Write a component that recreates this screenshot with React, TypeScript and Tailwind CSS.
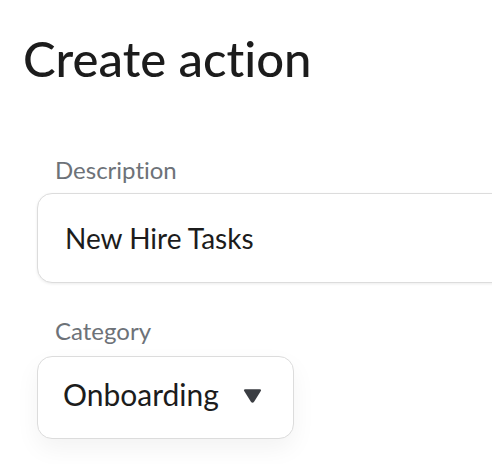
import React from "react"

function Field({ label, children }: { label: string; children: React.ReactNode }) {
  return (
    <div className="flex flex-col">
      <label className="pl-[18px] text-[24px] leading-[28px] text-[#6d7278]">{label}</label>
      {children}
    </div>
  )
}

export default function App() {
  return (
    <div
      className="w-[492px] h-[464px] overflow-hidden bg-white pl-[23px] [font-variant-ligatures:none]"
      style={{ fontFamily: "Lato, 'Noto Sans', sans-serif" }}
    >
      <h1 className="pt-[26px] text-[49px] leading-[64px] font-medium text-[#1c1c1c]">Create action</h1>
      <div className="mt-[66px] pl-[14px] flex flex-col gap-[34px]">
        <Field label="Description">
          <div className="mt-[9px] h-[90px] w-[480px] rounded-[15px] border border-[#dcdcdc] bg-white shadow-[0_1px_3px_rgba(0,0,0,0.08)] flex items-center pl-[27px]">
            <span className="text-[28px] text-[#1c1c1c]">New Hire Tasks</span>
          </div>
        </Field>
        <Field label="Category">
          <div className="mt-[11px] h-[83px] w-[257px] rounded-[15px] border border-[#dcdcdc] bg-white shadow-[0_10px_24px_rgba(0,0,0,0.05)] flex items-center pl-[25px] pb-[6px] gap-[24px]">
            <span className="text-[30px] text-[#1c1c1c]">Onboarding</span>
            <svg width="19" height="16" viewBox="0 0 18 15" className="mt-[2px]">
              <path d="M2.2 1 H15.8 Q17.9 1 16.7 3.1 L10.5 13 Q9 15 7.5 13 L1.3 3.1 Q0.1 1 2.2 1 Z" fill="#3a3d42" />
            </svg>
          </div>
        </Field>
      </div>
    </div>
  )
}
